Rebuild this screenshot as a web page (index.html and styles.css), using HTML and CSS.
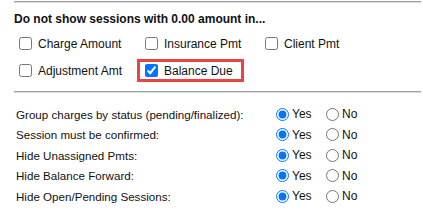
FILE: index.html
```html
<!DOCTYPE html>
<html lang="en">
<head>
    <meta charset="UTF-8" />
    <title>Report Options</title>
    <link rel="stylesheet" href="styles.css">
</head>
<body>
    <div class="panel">
        <hr class="rule" />

        <!-- zero amount filter -->
        <div class="zero-filter">
            <h4 class="section-title">Do not show sessions with 0.00 amount in...</h4>
            <div class="check-grid">
                <label class="check-item"><input type="checkbox" name="zero" value="charge" />Charge Amount</label>
                <label class="check-item"><input type="checkbox" name="zero" value="ins" />Insurance Pmt</label>
                <label class="check-item"><input type="checkbox" name="zero" value="client" />Client Pmt</label>
                <label class="check-item"><input type="checkbox" name="zero" value="adj" />Adjustment Amt</label>
                <label class="check-item is-marked"><input type="checkbox" name="zero" value="balance" checked />Balance Due</label>
            </div>
        </div>

        <hr class="rule" />

        <!-- yes / no options -->
        <div class="option-list">
            <div class="option-row">
                <span class="option-label">Group charges by status (pending/finalized):</span>
                <span class="option-choice">
                    <label class="choice"><input type="radio" name="group_status" value="Y" checked />Yes</label>
                    <label class="choice"><input type="radio" name="group_status" value="N" />No</label>
                </span>
            </div>
            <div class="option-row">
                <span class="option-label">Session must be confirmed:</span>
                <span class="option-choice">
                    <label class="choice"><input type="radio" name="confirmed" value="Y" checked />Yes</label>
                    <label class="choice"><input type="radio" name="confirmed" value="N" />No</label>
                </span>
            </div>
            <div class="option-row">
                <span class="option-label">Hide Unassigned Pmts:</span>
                <span class="option-choice">
                    <label class="choice"><input type="radio" name="hide_unassigned" value="Y" checked />Yes</label>
                    <label class="choice"><input type="radio" name="hide_unassigned" value="N" />No</label>
                </span>
            </div>
            <div class="option-row">
                <span class="option-label">Hide Balance Forward:</span>
                <span class="option-choice">
                    <label class="choice"><input type="radio" name="hide_forward" value="Y" checked />Yes</label>
                    <label class="choice"><input type="radio" name="hide_forward" value="N" />No</label>
                </span>
            </div>
            <div class="option-row">
                <span class="option-label">Hide Open/Pending Sessions:</span>
                <span class="option-choice">
                    <label class="choice"><input type="radio" name="hide_open" value="Y" checked />Yes</label>
                    <label class="choice"><input type="radio" name="hide_open" value="N" />No</label>
                </span>
            </div>
        </div>
    </div>
</body>
</html>
```

FILE: styles.css
```css
body {
    margin:0;
    font-family:"Liberation Sans", Arial, sans-serif;
    font-size:12px;
    color:#111;
    background:#fff;
}
.panel {
    padding:1px 2px 0 14px;
}
.rule {
    height:0;
    margin:0;
    border:0;
    border-top:1px solid #a0a0a0;
    border-bottom:1px solid #dcdcdc;
}
.section-title {
    margin:9px 0 0 0;
    font-size:12px;
    line-height:15px;
    font-weight:bold;
}
.check-grid {
    display:grid;
    grid-template-columns:126px 120px auto;
    row-gap:4px;
    margin:5px 0 9px -3px;
}
.check-item {
    display:flex;
    align-items:center;
    justify-self:start;
    box-sizing:border-box;
    height:23px;
    padding:0 8px 0 1px;
    border:3px solid transparent;
    white-space:nowrap;
}
.check-item input {
    width:13px;
    height:13px;
    margin:0 6px 0 4px;
}
.check-item.is-marked {
    border-color:#e94343;
}
.option-list {
    margin-top:11px;
    font-size:11.6px;
}
.option-row {
    display:grid;
    grid-template-columns:260px auto;
    align-items:center;
    height:20.5px;
}
.option-label {
    padding-left:2px;
    white-space:nowrap;
}
.option-choice {
    display:flex;
    font-size:12px;
}
.choice {
    display:inline-flex;
    align-items:center;
}
.choice:first-child {
    width:50px;
}
.choice input {
    width:13px;
    height:13px;
    margin:0 3px 0 2px;
}
```
